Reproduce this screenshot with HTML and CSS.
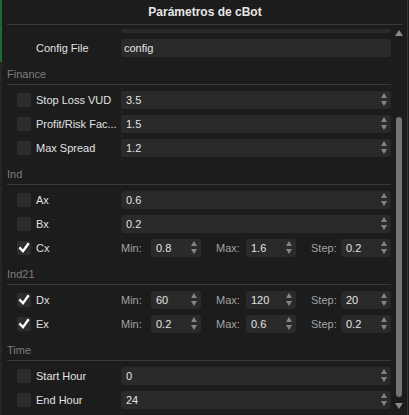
FILE: index.html
```html
<!DOCTYPE html>
<html lang="es">
<head>
<meta charset="utf-8">
<title>Parámetros de cBot</title>
<link rel="stylesheet" href="styles.css">
</head>
<body>
<div class="edge"></div>
<div class="panel">
  <div class="title">Parámetros de cBot</div>
  <div class="main">
    <div class="content">
      <div class="stub"></div>

      <div class="row">
        <span class="cb-space"></span>
        <span class="lbl">Config File</span>
        <div class="field txt">config</div>
      </div>

      <div class="sec">Finance</div>
      <div class="row">
        <span class="cb"></span>
        <span class="lbl">Stop Loss VUD</span>
        <div class="field"><span class="val">3.5</span><svg class="spin" width="6" height="13" viewBox="0 0 6 13"><path d="M3 0 L6 5 L0 5 Z M0 8 L6 8 L3 13 Z"/></svg></div>
      </div>
      <div class="row">
        <span class="cb"></span>
        <span class="lbl" title="Profit/Risk Factor">Profit/Risk Fac...</span>
        <div class="field"><span class="val">1.5</span><svg class="spin" width="6" height="13" viewBox="0 0 6 13"><path d="M3 0 L6 5 L0 5 Z M0 8 L6 8 L3 13 Z"/></svg></div>
      </div>
      <div class="row">
        <span class="cb"></span>
        <span class="lbl">Max Spread</span>
        <div class="field"><span class="val">1.2</span><svg class="spin" width="6" height="13" viewBox="0 0 6 13"><path d="M3 0 L6 5 L0 5 Z M0 8 L6 8 L3 13 Z"/></svg></div>
      </div>

      <div class="sec">Ind</div>
      <div class="row">
        <span class="cb"></span>
        <span class="lbl">Ax</span>
        <div class="field"><span class="val">0.6</span><svg class="spin" width="6" height="13" viewBox="0 0 6 13"><path d="M3 0 L6 5 L0 5 Z M0 8 L6 8 L3 13 Z"/></svg></div>
      </div>
      <div class="row">
        <span class="cb"></span>
        <span class="lbl">Bx</span>
        <div class="field"><span class="val">0.2</span><svg class="spin" width="6" height="13" viewBox="0 0 6 13"><path d="M3 0 L6 5 L0 5 Z M0 8 L6 8 L3 13 Z"/></svg></div>
      </div>
      <div class="row">
        <span class="cb on"><svg width="14" height="14" viewBox="0 0 14 14"><path d="M3.2 7.2 L6 10.2 L11 3.3"/></svg></span>
        <span class="lbl">Cx</span>
        <div class="range">
          <div class="grp"><span class="k">Min:</span><div class="field"><span class="val">0.8</span><svg class="spin" width="6" height="13" viewBox="0 0 6 13"><path d="M3 0 L6 5 L0 5 Z M0 8 L6 8 L3 13 Z"/></svg></div></div>
          <div class="grp"><span class="k">Max:</span><div class="field"><span class="val">1.6</span><svg class="spin" width="6" height="13" viewBox="0 0 6 13"><path d="M3 0 L6 5 L0 5 Z M0 8 L6 8 L3 13 Z"/></svg></div></div>
          <div class="grp"><span class="k">Step:</span><div class="field"><span class="val">0.2</span><svg class="spin" width="6" height="13" viewBox="0 0 6 13"><path d="M3 0 L6 5 L0 5 Z M0 8 L6 8 L3 13 Z"/></svg></div></div>
        </div>
      </div>

      <div class="sec">Ind21</div>
      <div class="row">
        <span class="cb on"><svg width="14" height="14" viewBox="0 0 14 14"><path d="M3.2 7.2 L6 10.2 L11 3.3"/></svg></span>
        <span class="lbl">Dx</span>
        <div class="range">
          <div class="grp"><span class="k">Min:</span><div class="field"><span class="val">60</span><svg class="spin" width="6" height="13" viewBox="0 0 6 13"><path d="M3 0 L6 5 L0 5 Z M0 8 L6 8 L3 13 Z"/></svg></div></div>
          <div class="grp"><span class="k">Max:</span><div class="field"><span class="val">120</span><svg class="spin" width="6" height="13" viewBox="0 0 6 13"><path d="M3 0 L6 5 L0 5 Z M0 8 L6 8 L3 13 Z"/></svg></div></div>
          <div class="grp"><span class="k">Step:</span><div class="field"><span class="val">20</span><svg class="spin" width="6" height="13" viewBox="0 0 6 13"><path d="M3 0 L6 5 L0 5 Z M0 8 L6 8 L3 13 Z"/></svg></div></div>
        </div>
      </div>
      <div class="row">
        <span class="cb on"><svg width="14" height="14" viewBox="0 0 14 14"><path d="M3.2 7.2 L6 10.2 L11 3.3"/></svg></span>
        <span class="lbl">Ex</span>
        <div class="range">
          <div class="grp"><span class="k">Min:</span><div class="field"><span class="val">0.2</span><svg class="spin" width="6" height="13" viewBox="0 0 6 13"><path d="M3 0 L6 5 L0 5 Z M0 8 L6 8 L3 13 Z"/></svg></div></div>
          <div class="grp"><span class="k">Max:</span><div class="field"><span class="val">0.6</span><svg class="spin" width="6" height="13" viewBox="0 0 6 13"><path d="M3 0 L6 5 L0 5 Z M0 8 L6 8 L3 13 Z"/></svg></div></div>
          <div class="grp"><span class="k">Step:</span><div class="field"><span class="val">0.2</span><svg class="spin" width="6" height="13" viewBox="0 0 6 13"><path d="M3 0 L6 5 L0 5 Z M0 8 L6 8 L3 13 Z"/></svg></div></div>
        </div>
      </div>

      <div class="sec">Time</div>
      <div class="row">
        <span class="cb"></span>
        <span class="lbl">Start Hour</span>
        <div class="field"><span class="val">0</span><svg class="spin" width="6" height="13" viewBox="0 0 6 13"><path d="M3 0 L6 5 L0 5 Z M0 8 L6 8 L3 13 Z"/></svg></div>
      </div>
      <div class="row">
        <span class="cb"></span>
        <span class="lbl">End Hour</span>
        <div class="field"><span class="val">24</span><svg class="spin" width="6" height="13" viewBox="0 0 6 13"><path d="M3 0 L6 5 L0 5 Z M0 8 L6 8 L3 13 Z"/></svg></div>
      </div>
    </div>

    <div class="scroll">
      <svg class="arrow" width="8" height="6" viewBox="0 0 8 6"><path d="M4 0 L8 6 L0 6 Z"/></svg>
      <div class="track"><div class="thumb" style="margin-top:81px;height:280px"></div></div>
      <svg class="arrow down" width="8" height="6" viewBox="0 0 8 6"><path d="M0 0 L8 0 L4 6 Z"/></svg>
    </div>
  </div>
</div>
</body>
</html>
```

FILE: styles.css
```css
* { box-sizing: border-box; }
html, body { margin: 0; padding: 0; }
body {
  width: 409px;
  height: 415px;
  overflow: hidden;
  display: flex;
  background: #1c1c1c;
  font-family: "Liberation Sans", Arial, sans-serif;
  font-size: 11px;
  color: #dedede;
}
.edge {
  width: 2px;
  flex: none;
  background: linear-gradient(#1d6a34 0, #1d6a34 62px, #262626 62px);
}
.panel {
  width: 406px;
  flex: none;
  display: flex;
  flex-direction: column;
  background: #1c1c1c;
  border-right: 1px solid #363636;
}
.title {
  height: 25px;
  flex: none;
  margin: 0 4px 0 5px;
  border-bottom: 1px solid #3a3a3a;
  display: flex;
  align-items: center;
  justify-content: center;
  font-weight: bold;
  font-size: 12px;
  color: #e6e6e6;
}
.main {
  flex: 1;
  min-height: 0;
  display: flex;
  padding-top: 4px;
}
.content {
  width: 384px;
  margin-left: 5px;
  flex: none;
  overflow: hidden;
}
.stub {
  height: 4px;
  margin: 0 0 3px 114px;
  background: #2a2a2a;
  border-radius: 0 0 3px 3px;
}
.row {
  height: 24px;
  display: flex;
  align-items: center;
}
.cb, .cb-space {
  width: 14px;
  height: 14px;
  margin-left: 10px;
  margin-right: 5px;
  flex: none;
}
.cb {
  background: #2d2d2d;
  border-radius: 2px;
  display: flex;
}
.cb svg path {
  fill: none;
  stroke: #ffffff;
  stroke-width: 2.4;
  stroke-linecap: square;
}
.lbl {
  width: 85px;
  flex: none;
  white-space: nowrap;
  color: #e2e2e2;
}
.field {
  flex: 1;
  height: 18px;
  background: #2a2a2a;
  border-radius: 3px;
  display: flex;
  align-items: center;
  padding-left: 5px;
  color: #e4e4e4;
}
.field.txt { padding-left: 3px; }
.val { flex: 1; }
.spin {
  flex: none;
  margin-right: 4px;
  margin-top: -1px;
}
.spin path { fill: #858585; }
.range {
  flex: 1;
  display: flex;
  gap: 15px;
}
.grp {
  width: 80px;
  display: flex;
  align-items: center;
}
.grp .k {
  width: 30px;
  flex: none;
  color: #a3a3a3;
}
.sec {
  height: 25px;
  margin-bottom: 3px;
  border-bottom: 1px solid #3a3a3a;
  display: flex;
  align-items: flex-end;
  padding-bottom: 3px;
  line-height: 13px;
  color: #7c7c7c;
}
.scroll {
  width: 8px;
  margin-left: 4px;
  flex: none;
  display: flex;
  flex-direction: column;
}
.arrow {
  flex: none;
  margin-top: 1px;
}
.arrow path { fill: #8c8c8c; }
.arrow.down {
  margin-top: 0;
  margin-bottom: 6px;
}
.track {
  flex: 1;
  padding: 0 1px;
}
.thumb {
  background: #747474;
  border-radius: 3px;
}
```
